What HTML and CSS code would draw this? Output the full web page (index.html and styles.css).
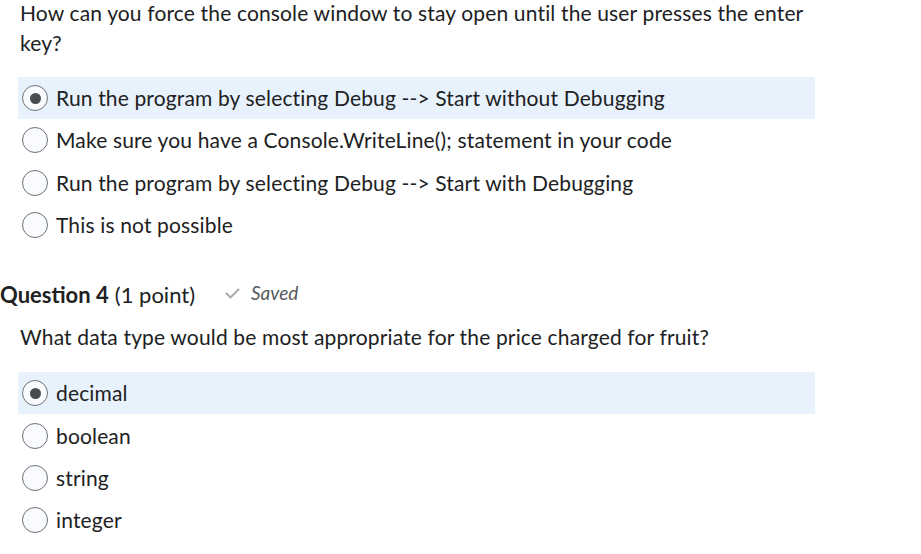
FILE: index.html
```html
<!DOCTYPE html>
<html lang="en">
<head>
<meta charset="utf-8">
<title>Quiz</title>
<link rel="stylesheet" href="styles.css">
</head>
<body>
<section class="question first">
  <p class="question-text">How can you force the console window to stay open until the user presses the enter key?</p>
  <ul class="options">
    <li class="option selected"><span class="radio checked"></span><span class="label">Run the program by selecting Debug --&gt; Start without Debugging</span></li>
    <li class="option"><span class="radio"></span><span class="label">Make sure you have a Console.WriteLine(); statement in your code</span></li>
    <li class="option"><span class="radio"></span><span class="label">Run the program by selecting Debug --&gt; Start with Debugging</span></li>
    <li class="option"><span class="radio"></span><span class="label">This is not possible</span></li>
  </ul>
</section>
<section class="question second">
  <h2 class="question-head"><strong>Question 4</strong> (1 point)<span class="saved"><svg class="check" width="15" height="11" viewBox="0 0 15 11"><path d="M1.5 5.5 L5.5 9.5 L13.5 1.5" fill="none" stroke="#a9acae" stroke-width="2" stroke-linecap="round" stroke-linejoin="round"/></svg><em>Saved</em></span></h2>
  <p class="question-text">What data type would be most appropriate for the price charged for fruit?</p>
  <ul class="options">
    <li class="option selected"><span class="radio checked"></span><span class="label">decimal</span></li>
    <li class="option"><span class="radio"></span><span class="label">boolean</span></li>
    <li class="option"><span class="radio"></span><span class="label">string</span></li>
    <li class="option"><span class="radio"></span><span class="label">integer</span></li>
  </ul>
</section>
</body>
</html>
```
FILE: styles.css
```css
html, body {
  margin: 0;
  padding: 0;
  background: #ffffff;
}
body {
  font-family: Lato, "Open Sans", sans-serif;
  font-size: 21px;
  letter-spacing: 0.15px;
  line-height: 30px;
  color: #202122;
}
.question-text {
  margin: 0;
  padding-left: 20px;
  width: 800px;
}
.first .question-text {
  margin-top: -2px;
}
.options {
  list-style: none;
  margin: 21px 0 0 18px;
  padding: 0;
  width: 797px;
}
.first .options {
  margin-top: 19px;
}
.option {
  height: 42.3px;
  display: flex;
  align-items: center;
  gap: 8px;
  padding-left: 4px;
}
.option.selected {
  background: #e8f2fc;
}
.radio {
  box-sizing: border-box;
  width: 26px;
  height: 26px;
  border: 1px solid #6e7376;
  border-radius: 50%;
  background: #f9fbff;
  display: flex;
  align-items: center;
  justify-content: center;
  flex: none;
}
.radio.checked::after {
  content: "";
  width: 11px;
  height: 11px;
  border-radius: 50%;
  background: #494c4e;
}
.label {
  white-space: nowrap;
}
.question-head {
  margin: 34px 0 12px 0;
  font-size: 22px;
  letter-spacing: 0;
  font-weight: 400;
  line-height: 30px;
  display: flex;
  align-items: baseline;
}
.question-head strong {
  font-weight: 700;
  margin-right: 6px;
}
.second .options {
  margin-top: 20px;
}
.saved {
  display: inline-flex;
  align-items: center;
  align-self: flex-start;
  height: 30px;
  line-height: 30px;
  margin: -2px 0 2px 30px;
  color: #565a5c;
  font-size: 19px;
}
.check {
  margin-right: 11px;
}
.saved em {
  font-style: italic;
}
```
